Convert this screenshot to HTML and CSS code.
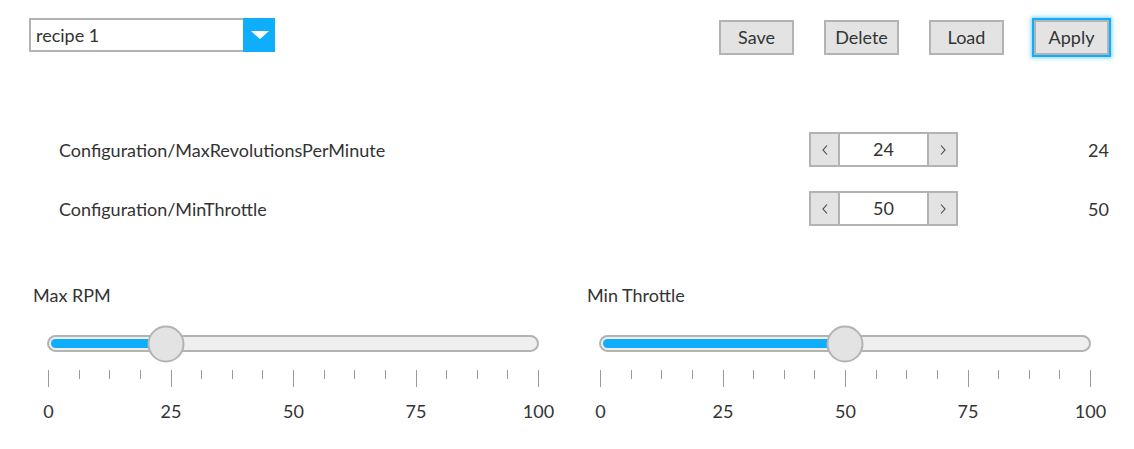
FILE: index.html
```html
<!DOCTYPE html>
<html>
<head>
<meta charset="utf-8">
<link rel="stylesheet" href="styles.css">
</head>
<body>
<div class="page">
  <div class="toolbar">
    <div class="select">
      <div class="select-field">recipe 1</div>
      <div class="select-arrow"><span class="tri"></span></div>
    </div>
    <div class="actions">
      <button class="btn">Save</button>
      <button class="btn">Delete</button>
      <button class="btn">Load</button>
      <button class="btn btn-focus">Apply</button>
    </div>
  </div>

  <div class="params">
    <div class="param-row">
      <div class="param-name">Configuration/MaxRevolutionsPerMinute</div>
      <div class="spin">
        <div class="spin-btn"><svg width="6" height="10" viewBox="0 0 6 10"><polyline points="5,0.5 1,5 5,9.5" fill="none" stroke="#444" stroke-width="1.1"/></svg></div>
        <div class="spin-value">24</div>
        <div class="spin-btn"><svg width="6" height="10" viewBox="0 0 6 10"><polyline points="1,0.5 5,5 1,9.5" fill="none" stroke="#444" stroke-width="1.1"/></svg></div>
      </div>
      <div class="param-value">24</div>
    </div>
    <div class="param-row">
      <div class="param-name">Configuration/MinThrottle</div>
      <div class="spin">
        <div class="spin-btn"><svg width="6" height="10" viewBox="0 0 6 10"><polyline points="5,0.5 1,5 5,9.5" fill="none" stroke="#444" stroke-width="1.1"/></svg></div>
        <div class="spin-value">50</div>
        <div class="spin-btn"><svg width="6" height="10" viewBox="0 0 6 10"><polyline points="1,0.5 5,5 1,9.5" fill="none" stroke="#444" stroke-width="1.1"/></svg></div>
      </div>
      <div class="param-value">50</div>
    </div>
  </div>

  <div class="sliders">
    <div class="slider">
      <div class="slider-label">Max RPM</div>
      <div class="slider-body">
        <div class="track">
          <div class="fill" style="width: 24%"></div>
          <div class="handle" style="left: 24%"></div>
        </div>
        <div class="ticks">
          <i class="tick major"></i><i class="tick"></i><i class="tick"></i><i class="tick"></i>
          <i class="tick major"></i><i class="tick"></i><i class="tick"></i><i class="tick"></i>
          <i class="tick major"></i><i class="tick"></i><i class="tick"></i><i class="tick"></i>
          <i class="tick major"></i><i class="tick"></i><i class="tick"></i><i class="tick"></i>
          <i class="tick major"></i>
        </div>
        <div class="tick-labels">
          <span>0</span><span>25</span><span>50</span><span>75</span><span>100</span>
        </div>
      </div>
    </div>
    <div class="slider slider-right">
      <div class="slider-label">Min Throttle</div>
      <div class="slider-body">
        <div class="track">
          <div class="fill" style="width: 50%"></div>
          <div class="handle" style="left: 50%"></div>
        </div>
        <div class="ticks">
          <i class="tick major"></i><i class="tick"></i><i class="tick"></i><i class="tick"></i>
          <i class="tick major"></i><i class="tick"></i><i class="tick"></i><i class="tick"></i>
          <i class="tick major"></i><i class="tick"></i><i class="tick"></i><i class="tick"></i>
          <i class="tick major"></i><i class="tick"></i><i class="tick"></i><i class="tick"></i>
          <i class="tick major"></i>
        </div>
        <div class="tick-labels">
          <span>0</span><span>25</span><span>50</span><span>75</span><span>100</span>
        </div>
      </div>
    </div>
  </div>
</div>
</body>
</html>
```

FILE: styles.css
```css
* { box-sizing: border-box; }

html, body {
  margin: 0;
  padding: 0;
  background: #ffffff;
}

body {
  font-family: Lato, "Open Sans", sans-serif;
  font-size: 18px;
  color: #333333;
}

.page {
  padding: 18px 25px 0 29px;
}

/* Toolbar */
.toolbar {
  display: flex;
  justify-content: space-between;
  align-items: flex-start;
  height: 37px;
}

.select {
  display: flex;
  width: 246px;
  height: 34px;
}

.select-field {
  flex: 1;
  border: 2px solid #b3b3b3;
  border-right: none;
  background: #fff;
  padding-left: 5px;
  line-height: 30px;
  font-size: 18px;
  color: #333;
}

.select-arrow {
  width: 32px;
  height: 34px;
  background: #0faefc;
  display: flex;
  align-items: center;
  justify-content: center;
}

.tri {
  width: 0;
  height: 0;
  border-left: 9px solid transparent;
  border-right: 9px solid transparent;
  border-top: 8px solid #ffffff;
  margin-left: 1px;
}

.actions {
  display: flex;
  gap: 30px;
  margin-top: 2px;
}

.btn {
  width: 75px;
  height: 35px;
  padding: 0;
  border: 2px solid #b3b3b3;
  background: #e3e3e3;
  font-family: Lato, "Open Sans", sans-serif;
  font-size: 18px;
  color: #333;
  line-height: 31px;
}

.btn-focus {
  border-color: #b3b3b3;
  box-shadow: 0 0 0 2px #0faefc, 0 0 4px 3px rgba(15, 174, 252, 0.55);
}

/* Params */
.params {
  margin-top: 77px;
  display: flex;
  flex-direction: column;
  gap: 24px;
}

.param-row {
  display: flex;
  align-items: center;
  height: 35px;
}

.param-name {
  flex: 1;
  padding-left: 30px;
}

.spin {
  width: 149px;
  height: 35px;
  display: flex;
  border: 2px solid #b3b3b3;
}

.spin-btn {
  width: 27px;
  background: #e3e3e3;
  display: flex;
  align-items: center;
  justify-content: center;
}

.spin-btn svg {
  display: block;
}

.spin-value {
  flex: 1;
  background: #fff;
  border-left: 2px solid #b3b3b3;
  border-right: 2px solid #b3b3b3;
  text-align: center;
  line-height: 31px;
  font-size: 18px;
}

.param-value {
  width: 151px;
  text-align: right;
}

/* Sliders */
.sliders {
  margin-top: 59px;
  margin-left: 4px;
  display: grid;
  grid-template-columns: 554px 1fr;
}

.slider-label {
  line-height: 20px;
  height: 20px;
}

.slider-body {
  margin-left: 14px;
  width: 492px;
}

.slider-right .slider-body {
  margin-left: 12px;
}

.track {
  position: relative;
  margin-top: 30px;
  height: 17px;
  border: 2px solid #b3b3b3;
  border-radius: 9px;
  background: #efefef;
  padding: 2px;
}

.fill {
  height: 100%;
  background: #0faefc;
  border-radius: 5px;
}

.handle {
  position: absolute;
  top: 50%;
  width: 37px;
  height: 37px;
  border-radius: 50%;
  background: #e3e3e3;
  border: 2px solid #b3b3b3;
  transform: translate(-50%, -50%);
}

.ticks {
  margin-top: 18px;
  height: 17px;
  display: flex;
  justify-content: space-between;
  align-items: flex-start;
  padding-left: 1px;
}

.tick {
  display: block;
  width: 1px;
  height: 9px;
  background: #9a9a9a;
}

.tick.major {
  height: 17px;
}

.tick-labels {
  margin-top: 14px;
  display: flex;
  justify-content: space-between;
  padding-left: 1px;
  line-height: 20px;
}

.tick-labels span {
  width: 1px;
  display: flex;
  justify-content: center;
  white-space: nowrap;
}
```
